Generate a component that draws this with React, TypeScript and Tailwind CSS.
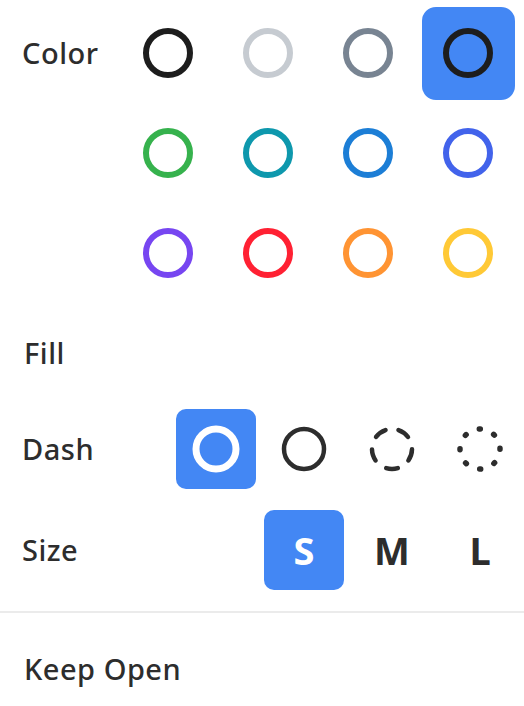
import React from "react";

const colors = [
  "#1d1d1d", "#c6cbd1", "#788492", "#1d1d1d",
  "#36b24d", "#0e98ad", "#1c7ed6", "#4263eb",
  "#7746f1", "#ff2133", "#ff9433", "#ffc936",
];

function Ring({ color, width = 6 }: { color: string; width?: number }) {
  return (
    <svg width="52" height="52" viewBox="0 0 52 52">
      <circle cx="26" cy="26" r={25 - width / 2} fill="none" stroke={color} strokeWidth={width} />
    </svg>
  );
}

function DashIcon({ kind, selected }: { kind: string; selected?: boolean }) {
  if (kind === "dashed") {
    return (
      <svg width="52" height="52" viewBox="0 0 52 52">
        <circle
          cx="26"
          cy="26"
          r="20"
          fill="none"
          stroke="#2d2d2d"
          strokeWidth="4.5"
          pathLength={360}
          strokeDasharray="34 38"
          strokeLinecap="round"
          transform="rotate(73 26 26)"
        />
      </svg>
    );
  }
  if (kind === "dotted") {
    return (
      <svg width="52" height="52" viewBox="0 0 52 52">
        <circle
          cx="26"
          cy="26"
          r="20"
          fill="none"
          stroke="#2d2d2d"
          strokeWidth="5.5"
          pathLength={360}
          strokeDasharray="3 42"
          strokeLinecap="round"
          transform="rotate(-92 26 26)"
        />
      </svg>
    );
  }
  return (
    <svg width="52" height="52" viewBox="0 0 52 52">
      <circle
        cx="26"
        cy="26"
        r="20"
        fill="none"
        stroke={selected ? "#ffffff" : "#2d2d2d"}
        strokeWidth={selected ? 7 : 4.5}
      />
    </svg>
  );
}

export default function App() {
  return (
    <div
      className="w-[524px] h-[706px] bg-white text-[#2d2d2d] overflow-hidden"
      style={{ fontFamily: '"Noto Sans", "Open Sans", sans-serif' }}
    >
      {/* color */}
      <div className="flex pt-[3px]">
        <div className="w-[118px] h-[100px] flex items-center pl-[22px] text-[29px] font-medium tracking-[0.5px]">
          Color
        </div>
        <div className="grid grid-cols-4 w-[400px]">
          {colors.map((c, i) => (
            <div key={i} className="w-[100px] h-[100px] flex items-center justify-center">
              <div
                className={`w-[93px] h-[93px] rounded-[14px] flex items-center justify-center ${i === 3 ? "bg-[#4387f4]" : ""}`}
              >
                <Ring color={c} />
              </div>
            </div>
          ))}
        </div>
      </div>

      {/* fill */}
      <div className="h-[100px] flex items-center pl-[24px] text-[29px] font-medium tracking-[0.5px]">Fill</div>

      {/* dash */}
      <div className="mt-[2px] h-[88px] flex items-center justify-between">
        <div className="pl-[22px] text-[29px] font-medium tracking-[0.5px]">Dash</div>
        <div className="flex">
          {["draw", "solid", "dashed", "dotted"].map((k, i) => (
            <div key={k} className="w-[88px] h-[88px] flex items-center justify-center">
              <div
                className={`w-[80px] h-[80px] rounded-[10px] flex items-center justify-center ${i === 0 ? "bg-[#4387f4]" : ""}`}
              >
                <DashIcon kind={k} selected={i === 0} />
              </div>
            </div>
          ))}
        </div>
      </div>

      {/* size */}
      <div className="mt-[13px] h-[88px] flex items-center justify-between">
        <div className="pl-[22px] text-[29px] font-medium tracking-[0.5px]">Size</div>
        <div className="flex">
          {["S", "M", "L"].map((s, i) => (
            <div key={s} className="w-[88px] h-[88px] flex items-center justify-center">
              <div
                className={`w-[80px] h-[80px] rounded-[10px] flex items-center justify-center text-[38px] font-bold ${
                  i === 0 ? "bg-[#4387f4] text-white" : "text-[#2d2d2d]"
                }`}
              >
                {s}
              </div>
            </div>
          ))}
        </div>
      </div>

      <div className="mt-[17px] h-[2px] bg-[#ebebeb]" />

      <div className="h-[112px] flex items-center pl-[24px] text-[29px] font-medium tracking-[0.5px]">Keep Open</div>
    </div>
  );
}
